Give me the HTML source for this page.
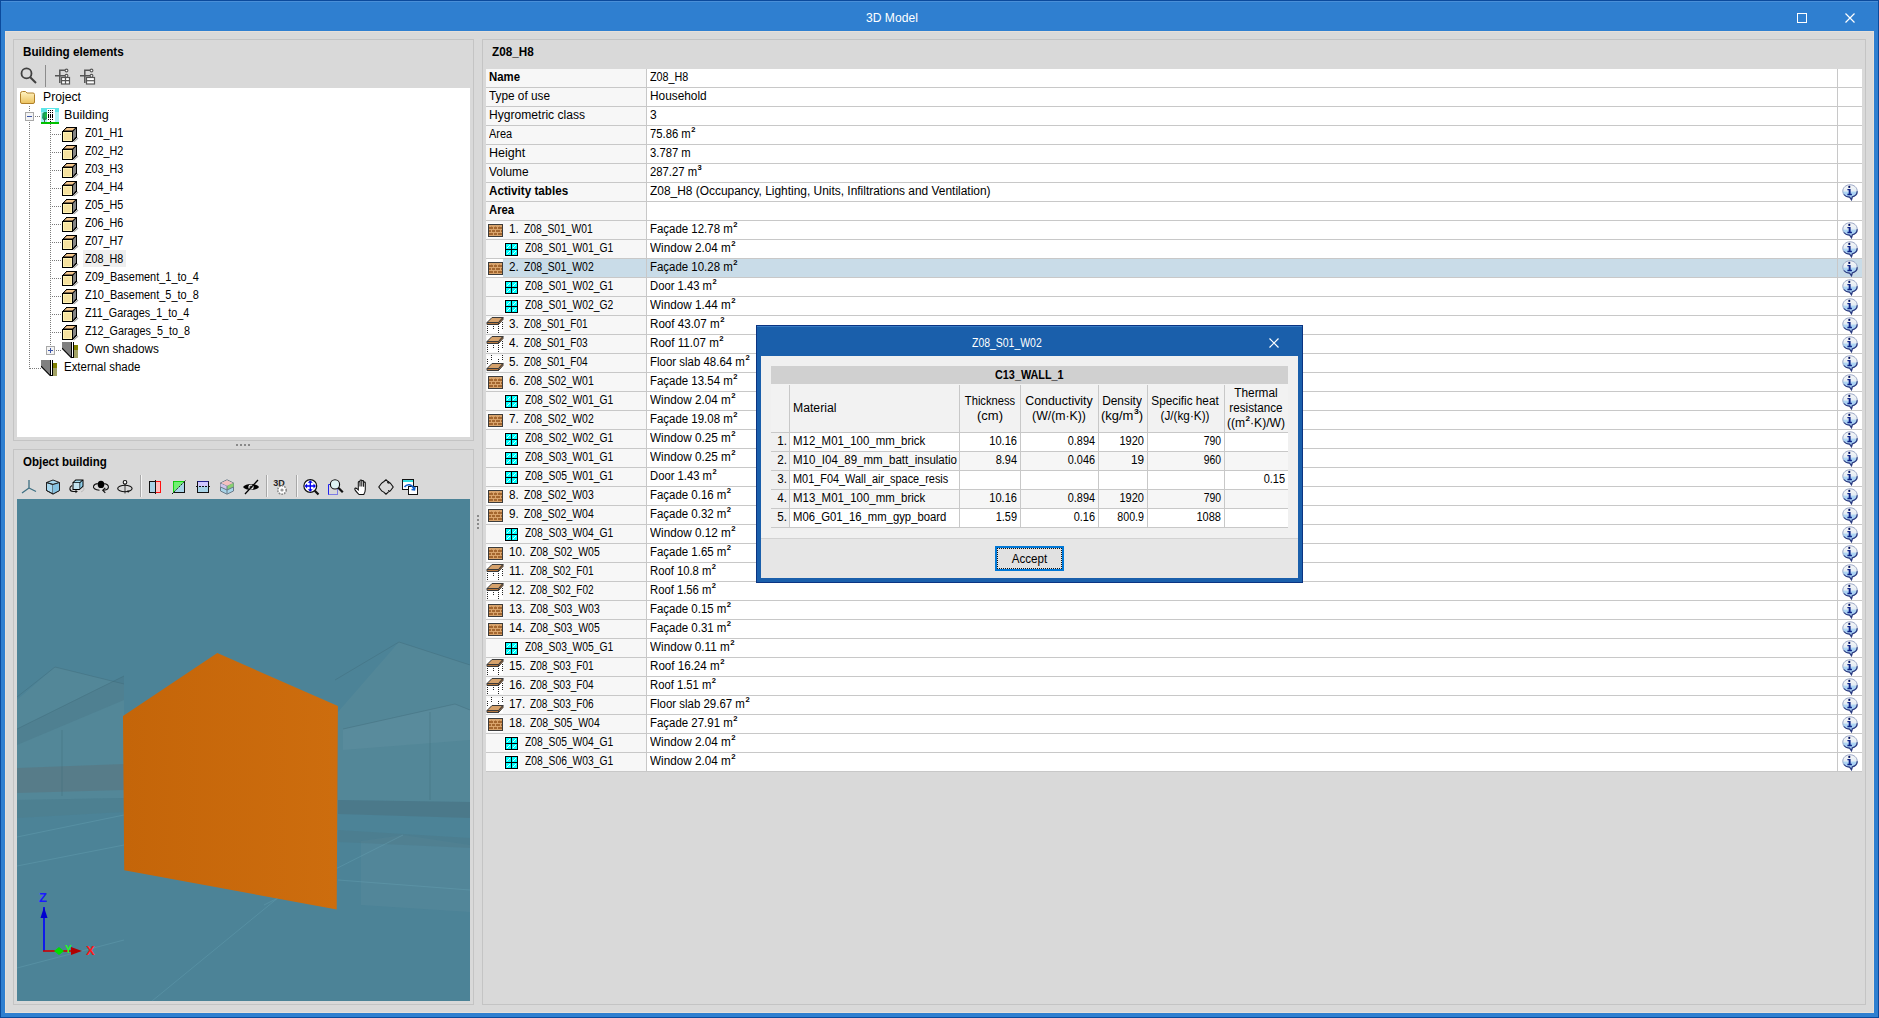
<!DOCTYPE html><html><head><meta charset="utf-8"><title>3D Model</title><style>
*{margin:0;padding:0;box-sizing:border-box}
html,body{width:1879px;height:1018px;overflow:hidden}
body{position:relative;background:#d9d9d9;font-family:"Liberation Sans",sans-serif;font-size:12px;color:#000;line-height:16px}
.a{position:absolute}
.t{position:absolute;white-space:nowrap;line-height:16px}
.b{font-weight:bold}
.sup{font-size:8px;font-weight:bold;position:relative;top:-6px;margin-left:0.5px}
.hl{position:absolute;background:#c8c8c8}
.vl{position:absolute;background:#c8c8c8}
svg{position:absolute;overflow:visible}
.dv{position:absolute;width:1px;background:repeating-linear-gradient(to bottom,#7a7a7a 0,#7a7a7a 1px,transparent 1px,transparent 2px)}
.dh{position:absolute;height:1px;background:repeating-linear-gradient(to right,#7a7a7a 0,#7a7a7a 1px,transparent 1px,transparent 2px)}
</style></head><body>
<svg width="0" height="0" style="position:absolute"><defs>
<symbol id="folder" viewBox="0 0 15 13"><defs><linearGradient id="fg" x1="0" y1="0" x2="0" y2="1"><stop offset="0" stop-color="#fff4c4"/><stop offset="1" stop-color="#ecc25e"/></linearGradient></defs><path d="M0.5 2.5 Q0.5 0.5 2.5 0.5 H5.5 L7 2 H13 Q14.5 2 14.5 3.5 V11 Q14.5 12.5 13 12.5 H2 Q0.5 12.5 0.5 11 Z" fill="url(#fg)" stroke="#b0802a"/></symbol>
<symbol id="cube" viewBox="0 0 17 16" shape-rendering="crispEdges"><path d="M0 4L4 0H15V10L11 15H0Z" fill="#000"/><path d="M2 3.6L4.8 1H13.2L10.4 3.6Z" fill="#f6c88e" shape-rendering="auto"/><path d="M11 4.4L14 1.6V9.6L11 13Z" fill="#858585" shape-rendering="auto"/><rect x="1" y="5" width="9" height="9" fill="#fff2b4"/><rect x="2" y="6" width="7" height="7" fill="#f6e2a0"/><path d="M11.5 15L16 11" stroke="#a0a0a0" stroke-width="1.3" shape-rendering="auto"/></symbol>
<symbol id="shadow" viewBox="0 0 17 17"><path d="M0 0H9.5V15.8L0 6.2Z" fill="#808080"/><path d="M0 6.2L9.5 15.8" stroke="#000" stroke-width="1.1"/><rect x="9" y="0" width="1" height="16" fill="#000"/><rect x="11" y="0" width="1" height="16" fill="#000"/><rect x="10" y="15" width="1" height="1" fill="#000"/><rect x="12" y="3" width="4" height="5" fill="#808000"/><rect x="12" y="8" width="4" height="8" fill="#a3a365"/></symbol>
<symbol id="brick" viewBox="0 0 15 13" shape-rendering="crispEdges"><rect x="0" y="0" width="15" height="13" fill="#3c3c3c"/><rect x="1" y="1" width="13" height="11" fill="#d9a46c"/><rect x="1" y="3" width="4" height="2" fill="#a4672f"/><rect x="6" y="3" width="3" height="2" fill="#a4672f"/><rect x="10" y="3" width="4" height="2" fill="#a4672f"/><rect x="1" y="6" width="2" height="2" fill="#a4672f"/><rect x="4" y="6" width="3" height="2" fill="#a4672f"/><rect x="8" y="6" width="4" height="2" fill="#a4672f"/><rect x="13" y="6" width="1" height="2" fill="#a4672f"/><rect x="1" y="9" width="4" height="2" fill="#a4672f"/><rect x="6" y="9" width="3" height="2" fill="#a4672f"/><rect x="10" y="9" width="4" height="2" fill="#a4672f"/><rect x="3" y="2" width="1" height="1" fill="#c08a55"/><rect x="7" y="2" width="1" height="1" fill="#c08a55"/><rect x="11" y="2" width="1" height="1" fill="#c08a55"/></symbol>
<symbol id="win" viewBox="0 0 13 13"><rect x="0.5" y="0.5" width="12" height="12" fill="#00ffff" stroke="#000"/><path d="M6.5 0.5V12.5M0.5 6.5H12.5" stroke="#000"/><path d="M2 5L5 2M8 5L11 2M2 11L5 8M8 11L11 8" stroke="#fff" stroke-width="0.8"/></symbol>
<symbol id="roof" viewBox="0 0 18 18"><path d="M6 1.5H17L12.5 6.5H1Z" fill="#d6a26c" stroke="#3a3a3a" stroke-width="1"/><path d="M1 6.5H12.5V8.5H1Z" fill="#b77940" stroke="#3a3a3a" stroke-width="1"/><path d="M12.5 6.5L17 1.5V3.5L12.5 8.5Z" fill="#a86a35" stroke="#3a3a3a" stroke-width="1"/><rect x="1" y="10" width="1" height="1" fill="#222"/><rect x="1" y="12" width="1" height="1" fill="#222"/><rect x="1" y="14" width="1" height="1" fill="#222"/><rect x="1" y="16" width="1" height="1" fill="#222"/><rect x="7" y="10" width="1" height="1" fill="#222"/><rect x="7" y="12" width="1" height="1" fill="#222"/><rect x="12" y="10" width="1" height="1" fill="#222"/><rect x="12" y="12" width="1" height="1" fill="#222"/><rect x="12" y="14" width="1" height="1" fill="#222"/><rect x="12" y="16" width="1" height="1" fill="#222"/><rect x="16" y="6" width="1" height="1" fill="#222"/><rect x="16" y="8" width="1" height="1" fill="#222"/><rect x="16" y="10" width="1" height="1" fill="#222"/><rect x="16" y="12" width="1" height="1" fill="#222"/></symbol>
<symbol id="slab" viewBox="0 0 18 18"><rect x="5" y="1" width="1" height="1" fill="#222"/><rect x="5" y="3" width="1" height="1" fill="#222"/><rect x="5" y="5" width="1" height="1" fill="#222"/><rect x="16" y="1" width="1" height="1" fill="#222"/><rect x="16" y="3" width="1" height="1" fill="#222"/><rect x="16" y="5" width="1" height="1" fill="#222"/><rect x="1" y="5" width="1" height="1" fill="#222"/><rect x="1" y="7" width="1" height="1" fill="#222"/><rect x="1" y="9" width="1" height="1" fill="#222"/><rect x="12" y="5" width="1" height="1" fill="#222"/><rect x="12" y="7" width="1" height="1" fill="#222"/><path d="M6 9.5H17L12.5 14.5H1Z" fill="#d6a26c" stroke="#3a3a3a" stroke-width="1"/><path d="M1 14.5H12.5V16.5H1Z" fill="#b77940" stroke="#3a3a3a" stroke-width="1"/><path d="M12.5 14.5L17 9.5V11.5L12.5 16.5Z" fill="#a86a35" stroke="#3a3a3a" stroke-width="1"/></symbol>
<symbol id="info" viewBox="0 0 16 17"><defs><linearGradient id="ig" x1="0" y1="0" x2="0" y2="1"><stop offset="0" stop-color="#f6f6f6"/><stop offset="0.4" stop-color="#e6eef5"/><stop offset="0.52" stop-color="#acd4f4"/><stop offset="1" stop-color="#a4ccf0"/></linearGradient></defs><path d="M8 0.8 C12.2 0.8 15.2 3.6 15.2 7.2 C15.2 10.2 13 12.2 10.3 12.8 L9.5 15.8 L7.6 13.1 C3.5 13 0.8 10.4 0.8 7.2 C0.8 3.6 3.8 0.8 8 0.8 Z" fill="url(#ig)" stroke="#8d9cc0" stroke-width="0.9"/><path d="M15.2 7.2 C15.2 10.2 13 12.2 10.3 12.8 L9.5 15.8 L7.6 13.1 C5 13 3 12 1.8 10.5" fill="none" stroke="#2a3a80" stroke-width="1.2"/><circle cx="7.3" cy="2.9" r="1.1" fill="#001060"/><path d="M5.4 5 H8.6 V9.8 H9.9 V11.2 H5.4 V9.8 H6.7 V6.3 H5.4 Z" fill="#0c2288"/></symbol>
</defs></svg>
<div class="a" style="left:0;top:0;width:1879px;height:1018px;background:#2f7fd0;border:1px solid #0b4a9c"></div>
<div class="a" style="left:1px;top:1px;width:1877px;height:1px;background:#4a8fd8"></div>
<div class="a" style="left:5px;top:31px;width:1869px;height:982px;background:#d9d9d9;border:1px solid #e6e0da"></div>
<div class="t" style="left:866px;top:10px;color:#fff;transform:scaleX(1.010);transform-origin:left">3D Model</div>
<div class="a" style="left:1797px;top:13px;width:10px;height:10px;border:1px solid #fff"></div>
<svg style="left:1845px;top:13px" width="10" height="10"><path d="M0.5 0.5L9.5 9.5M9.5 0.5L0.5 9.5" stroke="#fff" stroke-width="1.2"/></svg>
<div class="a" style="left:13px;top:39px;width:461px;height:402px;border:1px solid #c4c4c4"></div>
<div class="a" style="left:13px;top:449px;width:461px;height:556px;border:1px solid #c4c4c4"></div>
<div class="a" style="left:482px;top:39px;width:1384px;height:966px;border:1px solid #c4c4c4"></div>
<div class="t b" style="left:23px;top:44px;transform:scaleX(0.974);transform-origin:left">Building elements</div>
<div class="t b" style="left:23px;top:454px;transform:scaleX(0.960);transform-origin:left">Object building</div>
<div class="t b" style="left:492px;top:44px;transform:scaleX(0.977);transform-origin:left">Z08_H8</div>
<div class="a" style="left:236px;top:444px;width:2px;height:2px;background:#8a8a8a"></div>
<div class="a" style="left:477px;top:515px;width:2px;height:2px;background:#8a8a8a"></div>
<div class="a" style="left:240px;top:444px;width:2px;height:2px;background:#8a8a8a"></div>
<div class="a" style="left:477px;top:519px;width:2px;height:2px;background:#8a8a8a"></div>
<div class="a" style="left:244px;top:444px;width:2px;height:2px;background:#8a8a8a"></div>
<div class="a" style="left:477px;top:523px;width:2px;height:2px;background:#8a8a8a"></div>
<div class="a" style="left:248px;top:444px;width:2px;height:2px;background:#8a8a8a"></div>
<div class="a" style="left:477px;top:527px;width:2px;height:2px;background:#8a8a8a"></div>
<svg style="left:18px;top:65px" width="22" height="22"><circle cx="8.5" cy="8.4" r="5" fill="none" stroke="#404040" stroke-width="1.8"/><path d="M12.2 12.2L18 18" stroke="#404040" stroke-width="2"/></svg>
<div class="a" style="left:45px;top:65px;width:1px;height:22px;background:#8c8c8c"></div>
<svg style="left:55px;top:69px" width="16" height="16"><path d="M0 6.8H5M4.8 0.5V14M4.8 1.3H10.5M4.8 6.8H10.5" stroke="#555" stroke-width="1.5" fill="none"/><circle cx="11.5" cy="1.5" r="1.4" fill="#fff" stroke="#555" stroke-width="1.1"/><circle cx="11.5" cy="6.8" r="1.4" fill="#fff" stroke="#555" stroke-width="1.1"/><rect x="6.5" y="8.5" width="8" height="6.5" fill="#fff" stroke="#555" stroke-width="1.2"/><path d="M10.5 8.5V15M6.5 11.7H14.5" stroke="#555" stroke-width="1.2"/></svg>
<svg style="left:80px;top:69px" width="16" height="16"><path d="M0 6.8H5M4.8 0.5V14M4.8 1.3H10.5M4.8 6.8H10.5" stroke="#555" stroke-width="1.5" fill="none"/><circle cx="11.5" cy="1.5" r="1.4" fill="#fff" stroke="#555" stroke-width="1.1"/><circle cx="11.5" cy="6.8" r="1.4" fill="#fff" stroke="#555" stroke-width="1.1"/><rect x="6.5" y="8.5" width="8" height="6.5" fill="#fff" stroke="#555" stroke-width="1.2"/><path d="M6.5 11.7H14.5" stroke="#555" stroke-width="1.2"/></svg>
<div class="a" style="left:17px;top:88px;width:453px;height:349px;background:#fff"></div>
<div class="dv" style="left:29px;top:106px;height:263px"></div>
<div class="dh" style="left:30px;top:368px;width:11px"></div>
<div class="dh" style="left:35px;top:116px;width:6px"></div>
<div class="dv" style="left:50px;top:124px;height:223px"></div>
<div class="dh" style="left:52px;top:134px;width:10px"></div>
<div class="dh" style="left:52px;top:152px;width:10px"></div>
<div class="dh" style="left:52px;top:170px;width:10px"></div>
<div class="dh" style="left:52px;top:188px;width:10px"></div>
<div class="dh" style="left:52px;top:206px;width:10px"></div>
<div class="dh" style="left:52px;top:224px;width:10px"></div>
<div class="dh" style="left:52px;top:242px;width:10px"></div>
<div class="dh" style="left:52px;top:260px;width:10px"></div>
<div class="dh" style="left:52px;top:278px;width:10px"></div>
<div class="dh" style="left:52px;top:296px;width:10px"></div>
<div class="dh" style="left:52px;top:314px;width:10px"></div>
<div class="dh" style="left:52px;top:332px;width:10px"></div>
<div class="dh" style="left:56px;top:350px;width:6px"></div>
<div class="a" style="left:83px;top:250px;width:43px;height:17px;background:#efefef"></div>
<svg style="left:20px;top:91px" width="15" height="13"><use href="#folder"/></svg>
<div class="t" style="left:43px;top:89px;transform:scaleX(1.017);transform-origin:left">Project</div>
<svg style="left:41px;top:108px" width="18" height="16" shape-rendering="crispEdges"><rect x="0" y="0" width="18" height="15" fill="#a8f2f4"/><rect x="0" y="0" width="18" height="4" fill="#5ce6e8"/><rect x="6" y="1" width="8" height="14" fill="#fff"/><rect x="7" y="2" width="1" height="1" fill="#000"/><rect x="9" y="2" width="1" height="1" fill="#000"/><rect x="11" y="2" width="1" height="1" fill="#000"/><rect x="7" y="4" width="1" height="1" fill="#000"/><rect x="9" y="4" width="1" height="1" fill="#000"/><rect x="11" y="4" width="1" height="1" fill="#000"/><rect x="7" y="6" width="1" height="4" fill="#000"/><rect x="9" y="6" width="1" height="4" fill="#000"/><rect x="11" y="6" width="1" height="4" fill="#000"/><rect x="7" y="11" width="1" height="1" fill="#000"/><rect x="9" y="11" width="1" height="1" fill="#000"/><rect x="11" y="11" width="1" height="1" fill="#000"/><rect x="9" y="13" width="1" height="2" fill="#000"/><path d="M1.5 5.5L3 4H6V11L4.5 12H2.5L1 10Z" fill="#1a9a5a" shape-rendering="auto"/><path d="M3.5 6L6 5V10L4 9Z" fill="#18c040" shape-rendering="auto"/><rect x="3" y="10" width="1" height="5" fill="#555"/><rect x="0" y="14" width="18" height="2" fill="#00c000"/></svg>
<div class="t" style="left:64px;top:107px;transform:scaleX(1.049);transform-origin:left">Building</div>
<svg style="left:62px;top:127px" width="17" height="16"><use href="#cube"/></svg>
<div class="t" style="left:85px;top:125px;transform:scaleX(0.898);transform-origin:left">Z01_H1</div>
<svg style="left:62px;top:145px" width="17" height="16"><use href="#cube"/></svg>
<div class="t" style="left:85px;top:143px;transform:scaleX(0.898);transform-origin:left">Z02_H2</div>
<svg style="left:62px;top:163px" width="17" height="16"><use href="#cube"/></svg>
<div class="t" style="left:85px;top:161px;transform:scaleX(0.898);transform-origin:left">Z03_H3</div>
<svg style="left:62px;top:181px" width="17" height="16"><use href="#cube"/></svg>
<div class="t" style="left:85px;top:179px;transform:scaleX(0.898);transform-origin:left">Z04_H4</div>
<svg style="left:62px;top:199px" width="17" height="16"><use href="#cube"/></svg>
<div class="t" style="left:85px;top:197px;transform:scaleX(0.898);transform-origin:left">Z05_H5</div>
<svg style="left:62px;top:217px" width="17" height="16"><use href="#cube"/></svg>
<div class="t" style="left:85px;top:215px;transform:scaleX(0.898);transform-origin:left">Z06_H6</div>
<svg style="left:62px;top:235px" width="17" height="16"><use href="#cube"/></svg>
<div class="t" style="left:85px;top:233px;transform:scaleX(0.898);transform-origin:left">Z07_H7</div>
<svg style="left:62px;top:253px" width="17" height="16"><use href="#cube"/></svg>
<div class="t" style="left:85px;top:251px;transform:scaleX(0.898);transform-origin:left">Z08_H8</div>
<svg style="left:62px;top:271px" width="17" height="16"><use href="#cube"/></svg>
<div class="t" style="left:85px;top:269px;transform:scaleX(0.912);transform-origin:left">Z09_Basement_1_to_4</div>
<svg style="left:62px;top:289px" width="17" height="16"><use href="#cube"/></svg>
<div class="t" style="left:85px;top:287px;transform:scaleX(0.912);transform-origin:left">Z10_Basement_5_to_8</div>
<svg style="left:62px;top:307px" width="17" height="16"><use href="#cube"/></svg>
<div class="t" style="left:85px;top:305px;transform:scaleX(0.899);transform-origin:left">Z11_Garages_1_to_4</div>
<svg style="left:62px;top:325px" width="17" height="16"><use href="#cube"/></svg>
<div class="t" style="left:85px;top:323px;transform:scaleX(0.899);transform-origin:left">Z12_Garages_5_to_8</div>
<svg style="left:62px;top:342px" width="17" height="17"><use href="#shadow"/></svg>
<div class="t" style="left:85px;top:341px;transform:scaleX(0.980);transform-origin:left">Own shadows</div>
<svg style="left:41px;top:360px" width="17" height="17"><use href="#shadow"/></svg>
<div class="t" style="left:64px;top:359px;transform:scaleX(0.954);transform-origin:left">External shade</div>
<svg style="left:25px;top:112px" width="9" height="9"><rect x="0.5" y="0.5" width="8" height="8" fill="#f4f4f4" stroke="#a8a8a8"/><path d="M2 4.5H7" stroke="#3c55a8"/></svg>
<svg style="left:46px;top:346px" width="9" height="9"><rect x="0.5" y="0.5" width="8" height="8" fill="#f4f4f4" stroke="#a8a8a8"/><path d="M2 4.5H7M4.5 2V7" stroke="#3c55a8"/></svg>
<svg style="left:21px;top:479px" width="16" height="16"><path d="M8 1V9L1 14M8 9L15 12.5" stroke="#3d6f82" stroke-width="1.3" fill="none"/></svg>
<svg style="left:45px;top:479px" width="16" height="16"><path d="M1.5 3.5L8 1L14.5 3.5V11.5L8 15L1.5 11.5Z" fill="#a8d8ef" stroke="#222"/><path d="M1.5 3.5L8 5.5L14.5 3.5M8 5.5V15" stroke="#222" fill="none"/><path d="M8 5.5L14.5 3.5V11.5L8 15Z" fill="#86c3e2"/><path d="M1.5 3.5L8 5.5L14.5 3.5V11.5L8 15L1.5 11.5Z" fill="none" stroke="#222"/></svg>
<svg style="left:69px;top:479px" width="16" height="16"><path d="M3 6.5C0 8 0 12 4 12.5H8" stroke="#111" fill="none" stroke-width="1.1"/><path d="M6.5 10.8L8.8 12.5L6.5 14.3Z" fill="#111"/><path d="M14 8C15.8 9.5 15 12 12 12.8" stroke="#bbb" fill="none"/><path d="M3.5 3.5L6.5 0.5H14.5V7.5L10.5 11H3.5Z" fill="#000"/><path d="M4.8 3.2L7 1.5H12.8L10.5 3.2Z" fill="#a8dff2"/><path d="M11.2 4L13.5 1.8V7L11.2 9.5Z" fill="#8fd0ec"/><rect x="4.5" y="4" width="6" height="6" fill="#c4e4f0"/></svg>
<svg style="left:93px;top:479px" width="16" height="16"><ellipse cx="8" cy="5.4" rx="3.3" ry="3.7" fill="#000"/><path d="M6.5 11.3C2 11 -0.3 9 0.6 7C1.3 5.4 3.5 4.6 4.8 4.6" stroke="#111" stroke-width="1.1" fill="none"/><path d="M11.2 4.6C13.5 4.8 15.8 6.3 15.4 8.4C15 10.4 12.5 11.2 10 11.3" stroke="#111" stroke-width="1.1" fill="none"/><path d="M12.3 8.8L9.8 11.3L12.3 13.8" stroke="#111" stroke-width="1.2" fill="none"/></svg>
<svg style="left:117px;top:479px" width="16" height="16"><path d="M8 5V14.5" stroke="#777" stroke-width="1.6"/><ellipse cx="7.9" cy="9.5" rx="7.2" ry="3.2" fill="none" stroke="#111" stroke-width="1.1"/><circle cx="8" cy="3.3" r="1.8" fill="#fff" stroke="#111" stroke-width="1.1"/><path d="M10 11.5L12.8 11.8L11 14Z" fill="#111"/></svg>
<div class="a" style="left:140px;top:475px;width:1px;height:22px;background:#a8a8a8"></div><div class="a" style="left:141px;top:475px;width:1px;height:22px;background:#f4f4f4"></div>
<svg style="left:147px;top:479px" width="16" height="16"><rect x="2.5" y="2.5" width="6" height="11" fill="#a8d4e8" stroke="#111"/><rect x="8.5" y="2.5" width="5" height="11" fill="#ffc0c0" stroke="#ff1010"/><path d="M2.5 2.5H8.5V13.5H2.5Z" fill="none" stroke="#111"/><path d="M8.5 1V15" stroke="#111" stroke-dasharray="1.5 1"/></svg>
<svg style="left:171px;top:479px" width="16" height="16"><rect x="2.5" y="2.5" width="11" height="11" fill="#a8d4e8" stroke="#111"/><path d="M2.5 2.5H13.5L2.5 13.5Z" fill="#70f070"/><path d="M2.5 13.5V2.5H13.5" stroke="#10d010" fill="none"/><path d="M1 15L15 1" stroke="#111" stroke-dasharray="1.5 1"/></svg>
<svg style="left:195px;top:479px" width="16" height="16"><rect x="2.5" y="2.5" width="11" height="11" fill="#a8d4e8" stroke="#111"/><rect x="3" y="3" width="10" height="4.5" fill="#d0c8ff"/><path d="M2.5 2.5H13.5" stroke="#202090"/><path d="M1 7.5H15" stroke="#111" stroke-dasharray="2 1"/></svg>
<svg style="left:219px;top:479px" width="16" height="16"><path d="M1.5 4L8 0.8L14.5 4V12L8 15.2L1.5 12Z" fill="#a8d4e8" stroke="#6a7a88"/><path d="M1.5 4L8 7L14.5 4" stroke="#6a7a88" fill="none"/><path d="M8 7L14.5 4V8L8 11Z" fill="#88d070"/><path d="M2 4L8 1.2L14 4L8 6.8Z" fill="#f4c0c0"/><path d="M1.5 4.5L8 7.3V10.5L1.5 7.8Z" fill="#d0c4ec"/><path d="M1.5 8L8 11L14.5 8M8 7V15" stroke="#6a7a88" fill="none"/></svg>
<svg style="left:243px;top:479px" width="16" height="16"><path d="M0 8C2.5 4 13.5 4 16 8C13.5 12 2.5 12 0 8Z" fill="#000"/><circle cx="8" cy="8" r="2.6" fill="#fff"/><circle cx="8" cy="8" r="1.6" fill="#444"/><path d="M2 15L15 1" stroke="#000" stroke-width="1.3"/></svg>
<div class="a" style="left:266px;top:475px;width:1px;height:22px;background:#a8a8a8"></div><div class="a" style="left:267px;top:475px;width:1px;height:22px;background:#f4f4f4"></div>
<svg style="left:273px;top:479px" width="16" height="16"><text x="0.3" y="7.2" font-family="Liberation Sans" font-weight="bold" font-size="9" fill="#222">3D</text><circle cx="9" cy="11" r="4.2" fill="#fff" stroke="#888" stroke-width="1.6" stroke-dasharray="1.7 1"/><circle cx="9" cy="11" r="1.6" fill="#999"/></svg>
<div class="a" style="left:296px;top:475px;width:1px;height:22px;background:#a8a8a8"></div><div class="a" style="left:297px;top:475px;width:1px;height:22px;background:#f4f4f4"></div>
<svg style="left:302px;top:479px" width="16" height="16"><circle cx="8.3" cy="7" r="6.4" fill="#fff" stroke="#111" stroke-width="1.2"/><path d="M8.3 2.5V11.5M3.8 7H12.8" stroke="#0000ee" stroke-width="1.3"/><path d="M8.3 1.3L5.8 3.8H10.8ZM8.3 12.7L5.8 10.2H10.8ZM2.6 7L5.1 4.5V9.5ZM14 7L11.5 4.5V9.5Z" fill="#0000ee"/><path d="M12.8 11.8L16.5 15.5" stroke="#111" stroke-width="2.2"/></svg>
<svg style="left:327px;top:479px" width="16" height="16"><path d="M1.5 15.5V5.5H10.5" stroke="#2222ee" fill="none"/><path d="M1.5 15.5H10.5V5.5" stroke="#2222ee" stroke-dasharray="1 1" fill="none"/><circle cx="8" cy="5.4" r="4.6" fill="#dff4f4" stroke="#111" stroke-width="1.1"/><path d="M11.3 8.7L15.8 13.2" stroke="#111" stroke-width="2.2"/></svg>
<svg style="left:354px;top:479px" width="16" height="16"><path d="M5 15.5C3.5 14 1 11.5 0.8 10.2C0.6 9 2 8.7 3.2 9.8L4.3 10.8V3.2C4.3 2.2 6 2.2 6 3.2V7.5V1.8C6 0.7 7.8 0.7 7.8 1.8V7.5V2.3C7.8 1.3 9.6 1.3 9.6 2.3V7.8V3.8C9.6 2.8 11.3 2.8 11.3 3.8V10.5C11.3 12.8 10.5 14.2 9.8 15.5Z" fill="#fff" stroke="#111" stroke-width="1.05"/></svg>
<svg style="left:378px;top:479px" width="16" height="16"><path d="M6 2.5L8 0.8L10.5 3.2M13 5L15.2 8L13 11M10.5 12.8L8 15.2L5.5 12.8M3 11L0.8 8L3 5" stroke="#111" stroke-width="1.1" fill="none"/><path d="M10.5 3.2C12 3.6 12.7 4.3 13 5M13 11C12.6 11.8 11.8 12.4 10.5 12.8M5.5 12.8C4.2 12.4 3.4 11.8 3 11M3 5C3.4 4.2 4.4 3.4 6 2.5" stroke="#111" stroke-width="1.1" fill="none"/><path d="M9 3.5L11.2 4.3L10.5 2M11.8 12.2L10 11.5" stroke="#111" fill="none"/></svg>
<svg style="left:402px;top:479px" width="16" height="16"><rect x="0.5" y="0.5" width="11" height="10" fill="#fff" stroke="#111"/><rect x="1" y="1" width="10" height="2" fill="#33dddd"/><rect x="6.5" y="7.5" width="9" height="8" fill="#fff" stroke="#111"/><path d="M2.5 8C5 4.5 10 5 12 10" stroke="#1160cc" stroke-width="1.6" fill="none"/><path d="M9.5 10.5L12.5 11L13 7.8" stroke="#1160cc" stroke-width="1.5" fill="none"/></svg>
<svg style="left:17px;top:499px" width="453" height="502" viewBox="0 0 453 502"><defs><linearGradient id="og" x1="0" y1="0" x2="1" y2="0"><stop offset="0" stop-color="#c46509"/><stop offset="1" stop-color="#cd6d0e"/></linearGradient></defs><rect width="453" height="502" fill="#4c8397"/><polygon points="0,201 38,168 107,185 107,299 0,301" fill="#628e9a" fill-opacity="0.35"/><polygon points="0,230 107,177 107,201 0,246" fill="#436c7a" fill-opacity="0.25"/><polygon points="0,269 107,265 107,291 0,294" fill="#5f6d70" fill-opacity="0.38"/><polygon points="0,301 107,299 107,313 0,319" fill="#4f7a86" fill-opacity="0.3"/><polygon points="321,213 382,143 453,166 453,303 321,301" fill="#628e9a" fill-opacity="0.35"/><polygon points="326,230 438,205 453,211 453,241 326,251" fill="#6a98a6" fill-opacity="0.25"/><polygon points="321,301 453,303 453,319 321,315" fill="#4b6c78" fill-opacity="0.4"/><polygon points="344,342 386,336 453,346 453,413 344,406" fill="#5f909e" fill-opacity="0.3"/><polygon points="321,331 453,339 453,349 321,343" fill="#4d7482" fill-opacity="0.3"/><g stroke="#3f6977" stroke-opacity="0.4" fill="none" stroke-width="1"><polyline points="0,198 38,168 107,185"/><polyline points="0,230 107,177"/><polyline points="318,181 382,143 453,166"/><polyline points="326,230 438,205 453,211"/><polyline points="45,231 45,297"/><polyline points="413,213 413,301"/></g><g stroke="#6aa5b8" stroke-opacity="0.35" fill="none" stroke-width="1"><polyline points="0,338 107,316"/><polyline points="0,367 107,346"/><polyline points="247,406 386,336"/><polyline points="135,502 262,398"/><polyline points="321,381 453,391"/><polyline points="0,469 107,441"/></g><polygon points="200.3,154 106,217 107.2,371.29999999999995 319.7,410.5 320.9,207" fill="url(#og)"/></svg>
<svg style="left:25px;top:880px" width="80" height="85"><path d="M19 27V71" stroke="#0000ff" stroke-width="1.6"/><path d="M19 27L15.5 38H22.5Z" fill="#0000d0"/><path d="M18 71H47" stroke="#cc0000" stroke-width="1.6"/><path d="M57 71L46 67V75Z" fill="#b00000"/><path d="M29 71L34 67L39 71L34 75Z" fill="#00dd00"/><text x="14" y="22" font-family="Liberation Sans" font-weight="bold" font-size="13" fill="#1a1aff">Z</text><text x="61" y="75" font-family="Liberation Sans" font-weight="bold" font-size="13" fill="#ff1a1a">X</text><text x="40" y="73" font-family="Liberation Sans" font-weight="bold" font-size="10" fill="#22ff22">Y</text></svg>
<div class="a" style="left:486px;top:69px;width:160px;height:703px;background:#f7f7f7"></div>
<div class="a" style="left:647px;top:69px;width:1215px;height:703px;background:#fff"></div>
<div class="a" style="left:503px;top:259px;width:1359px;height:18px;background:#c9dce8"></div>
<div class="hl" style="left:486px;top:87px;width:1376px;height:1px"></div>
<div class="hl" style="left:486px;top:106px;width:1376px;height:1px"></div>
<div class="hl" style="left:486px;top:125px;width:1376px;height:1px"></div>
<div class="hl" style="left:486px;top:144px;width:1376px;height:1px"></div>
<div class="hl" style="left:486px;top:163px;width:1376px;height:1px"></div>
<div class="hl" style="left:486px;top:182px;width:1376px;height:1px"></div>
<div class="hl" style="left:486px;top:201px;width:1376px;height:1px"></div>
<div class="hl" style="left:486px;top:220px;width:1376px;height:1px"></div>
<div class="hl" style="left:486px;top:239px;width:1376px;height:1px"></div>
<div class="hl" style="left:486px;top:258px;width:1376px;height:1px"></div>
<div class="hl" style="left:486px;top:277px;width:1376px;height:1px"></div>
<div class="hl" style="left:486px;top:296px;width:1376px;height:1px"></div>
<div class="hl" style="left:486px;top:315px;width:1376px;height:1px"></div>
<div class="hl" style="left:486px;top:334px;width:1376px;height:1px"></div>
<div class="hl" style="left:486px;top:353px;width:1376px;height:1px"></div>
<div class="hl" style="left:486px;top:372px;width:1376px;height:1px"></div>
<div class="hl" style="left:486px;top:391px;width:1376px;height:1px"></div>
<div class="hl" style="left:486px;top:410px;width:1376px;height:1px"></div>
<div class="hl" style="left:486px;top:429px;width:1376px;height:1px"></div>
<div class="hl" style="left:486px;top:448px;width:1376px;height:1px"></div>
<div class="hl" style="left:486px;top:467px;width:1376px;height:1px"></div>
<div class="hl" style="left:486px;top:486px;width:1376px;height:1px"></div>
<div class="hl" style="left:486px;top:505px;width:1376px;height:1px"></div>
<div class="hl" style="left:486px;top:524px;width:1376px;height:1px"></div>
<div class="hl" style="left:486px;top:543px;width:1376px;height:1px"></div>
<div class="hl" style="left:486px;top:562px;width:1376px;height:1px"></div>
<div class="hl" style="left:486px;top:581px;width:1376px;height:1px"></div>
<div class="hl" style="left:486px;top:600px;width:1376px;height:1px"></div>
<div class="hl" style="left:486px;top:619px;width:1376px;height:1px"></div>
<div class="hl" style="left:486px;top:638px;width:1376px;height:1px"></div>
<div class="hl" style="left:486px;top:657px;width:1376px;height:1px"></div>
<div class="hl" style="left:486px;top:676px;width:1376px;height:1px"></div>
<div class="hl" style="left:486px;top:695px;width:1376px;height:1px"></div>
<div class="hl" style="left:486px;top:714px;width:1376px;height:1px"></div>
<div class="hl" style="left:486px;top:733px;width:1376px;height:1px"></div>
<div class="hl" style="left:486px;top:752px;width:1376px;height:1px"></div>
<div class="hl" style="left:486px;top:771px;width:1376px;height:1px"></div>
<div class="vl" style="left:646px;top:69px;width:1px;height:703px"></div>
<div class="vl" style="left:1837px;top:69px;width:1px;height:703px"></div>
<div class="t b" style="left:489px;top:69px;transform:scaleX(0.948);transform-origin:left">Name</div>
<div class="t" style="left:650px;top:69px;transform:scaleX(0.898);transform-origin:left">Z08_H8</div>
<div class="t" style="left:489px;top:88px;transform:scaleX(0.983);transform-origin:left">Type of use</div>
<div class="t" style="left:650px;top:88px;transform:scaleX(0.988);transform-origin:left">Household</div>
<div class="t" style="left:489px;top:107px;transform:scaleX(1.007);transform-origin:left">Hygrometric class</div>
<div class="t" style="left:650px;top:107px">3</div>
<div class="t" style="left:489px;top:126px;transform:scaleX(0.912);transform-origin:left">Area</div>
<div class="t" style="left:650px;top:126px;transform:scaleX(0.939);transform-origin:left">75.86 m<span class="sup">2</span></div>
<div class="t" style="left:489px;top:145px;transform:scaleX(1.041);transform-origin:left">Height</div>
<div class="t" style="left:650px;top:145px;transform:scaleX(0.937);transform-origin:left">3.787 m</div>
<div class="t" style="left:489px;top:164px;transform:scaleX(0.990);transform-origin:left">Volume</div>
<div class="t" style="left:650px;top:164px;transform:scaleX(0.941);transform-origin:left">287.27 m<span class="sup">3</span></div>
<div class="t b" style="left:489px;top:183px;transform:scaleX(0.973);transform-origin:left">Activity tables</div>
<div class="t" style="left:650px;top:183px;transform:scaleX(0.994);transform-origin:left">Z08_H8 (Occupancy, Lighting, Units, Infiltrations and Ventilation)</div>
<svg style="left:1842px;top:184px" width="16" height="17"><use href="#info"/></svg>
<div class="t b" style="left:489px;top:202px;transform:scaleX(0.940);transform-origin:left">Area</div>
<div class="a" style="left:487px;top:223px;width:16px;height:15px;background:#fff"></div>
<svg style="left:488px;top:224px" width="15" height="13"><use href="#brick"/></svg>
<div class="t" style="left:509px;top:221px;transform:scaleX(0.969);transform-origin:left">1.</div>
<div class="t" style="left:524px;top:221px;transform:scaleX(0.857);transform-origin:left">Z08_S01_W01</div>
<div class="t" style="left:650px;top:221px;transform:scaleX(0.954);transform-origin:left">Façade 12.78 m<span class="sup">2</span></div>
<svg style="left:1842px;top:222px" width="16" height="17"><use href="#info"/></svg>
<div class="a" style="left:504px;top:242px;width:16px;height:15px;background:#fff"></div>
<svg style="left:505px;top:243px" width="13" height="13"><use href="#win"/></svg>
<div class="t" style="left:525px;top:240px;transform:scaleX(0.860);transform-origin:left">Z08_S01_W01_G1</div>
<div class="t" style="left:650px;top:240px;transform:scaleX(0.976);transform-origin:left">Window 2.04 m<span class="sup">2</span></div>
<svg style="left:1842px;top:241px" width="16" height="17"><use href="#info"/></svg>
<div class="a" style="left:487px;top:259px;width:16px;height:18px;background:#fff"></div>
<svg style="left:488px;top:262px" width="15" height="13"><use href="#brick"/></svg>
<div class="t" style="left:509px;top:259px;transform:scaleX(0.972);transform-origin:left">2.</div>
<div class="t" style="left:524px;top:259px;transform:scaleX(0.871);transform-origin:left">Z08_S01_W02</div>
<div class="t" style="left:650px;top:259px;transform:scaleX(0.954);transform-origin:left">Façade 10.28 m<span class="sup">2</span></div>
<svg style="left:1842px;top:260px" width="16" height="17"><use href="#info"/></svg>
<div class="a" style="left:504px;top:280px;width:16px;height:15px;background:#fff"></div>
<svg style="left:505px;top:281px" width="13" height="13"><use href="#win"/></svg>
<div class="t" style="left:525px;top:278px;transform:scaleX(0.860);transform-origin:left">Z08_S01_W02_G1</div>
<div class="t" style="left:650px;top:278px;transform:scaleX(0.938);transform-origin:left">Door 1.43 m<span class="sup">2</span></div>
<svg style="left:1842px;top:279px" width="16" height="17"><use href="#info"/></svg>
<div class="a" style="left:504px;top:299px;width:16px;height:15px;background:#fff"></div>
<svg style="left:505px;top:300px" width="13" height="13"><use href="#win"/></svg>
<div class="t" style="left:525px;top:297px;transform:scaleX(0.860);transform-origin:left">Z08_S01_W02_G2</div>
<div class="t" style="left:650px;top:297px;transform:scaleX(0.976);transform-origin:left">Window 1.44 m<span class="sup">2</span></div>
<svg style="left:1842px;top:298px" width="16" height="17"><use href="#info"/></svg>
<div class="a" style="left:487px;top:318px;width:16px;height:15px;background:#fff"></div>
<svg style="left:486px;top:316px" width="18" height="18"><use href="#roof"/></svg>
<div class="t" style="left:509px;top:316px;transform:scaleX(0.969);transform-origin:left">3.</div>
<div class="t" style="left:524px;top:316px;transform:scaleX(0.837);transform-origin:left">Z08_S01_F01</div>
<div class="t" style="left:650px;top:316px;transform:scaleX(0.967);transform-origin:left">Roof 43.07 m<span class="sup">2</span></div>
<svg style="left:1842px;top:317px" width="16" height="17"><use href="#info"/></svg>
<div class="a" style="left:487px;top:337px;width:16px;height:15px;background:#fff"></div>
<svg style="left:486px;top:335px" width="18" height="18"><use href="#roof"/></svg>
<div class="t" style="left:509px;top:335px;transform:scaleX(0.972);transform-origin:left">4.</div>
<div class="t" style="left:524px;top:335px;transform:scaleX(0.837);transform-origin:left">Z08_S01_F03</div>
<div class="t" style="left:650px;top:335px;transform:scaleX(0.967);transform-origin:left">Roof 11.07 m<span class="sup">2</span></div>
<svg style="left:1842px;top:336px" width="16" height="17"><use href="#info"/></svg>
<div class="a" style="left:487px;top:356px;width:16px;height:15px;background:#fff"></div>
<svg style="left:486px;top:354px" width="18" height="18"><use href="#slab"/></svg>
<div class="t" style="left:509px;top:354px;transform:scaleX(0.969);transform-origin:left">5.</div>
<div class="t" style="left:524px;top:354px;transform:scaleX(0.837);transform-origin:left">Z08_S01_F04</div>
<div class="t" style="left:650px;top:354px;transform:scaleX(0.955);transform-origin:left">Floor slab 48.64 m<span class="sup">2</span></div>
<svg style="left:1842px;top:355px" width="16" height="17"><use href="#info"/></svg>
<div class="a" style="left:487px;top:375px;width:16px;height:15px;background:#fff"></div>
<svg style="left:488px;top:376px" width="15" height="13"><use href="#brick"/></svg>
<div class="t" style="left:509px;top:373px;transform:scaleX(0.972);transform-origin:left">6.</div>
<div class="t" style="left:524px;top:373px;transform:scaleX(0.871);transform-origin:left">Z08_S02_W01</div>
<div class="t" style="left:650px;top:373px;transform:scaleX(0.954);transform-origin:left">Façade 13.54 m<span class="sup">2</span></div>
<svg style="left:1842px;top:374px" width="16" height="17"><use href="#info"/></svg>
<div class="a" style="left:504px;top:394px;width:16px;height:15px;background:#fff"></div>
<svg style="left:505px;top:395px" width="13" height="13"><use href="#win"/></svg>
<div class="t" style="left:525px;top:392px;transform:scaleX(0.860);transform-origin:left">Z08_S02_W01_G1</div>
<div class="t" style="left:650px;top:392px;transform:scaleX(0.976);transform-origin:left">Window 2.04 m<span class="sup">2</span></div>
<svg style="left:1842px;top:393px" width="16" height="17"><use href="#info"/></svg>
<div class="a" style="left:487px;top:413px;width:16px;height:15px;background:#fff"></div>
<svg style="left:488px;top:414px" width="15" height="13"><use href="#brick"/></svg>
<div class="t" style="left:509px;top:411px;transform:scaleX(0.972);transform-origin:left">7.</div>
<div class="t" style="left:524px;top:411px;transform:scaleX(0.871);transform-origin:left">Z08_S02_W02</div>
<div class="t" style="left:650px;top:411px;transform:scaleX(0.954);transform-origin:left">Façade 19.08 m<span class="sup">2</span></div>
<svg style="left:1842px;top:412px" width="16" height="17"><use href="#info"/></svg>
<div class="a" style="left:504px;top:432px;width:16px;height:15px;background:#fff"></div>
<svg style="left:505px;top:433px" width="13" height="13"><use href="#win"/></svg>
<div class="t" style="left:525px;top:430px;transform:scaleX(0.860);transform-origin:left">Z08_S02_W02_G1</div>
<div class="t" style="left:650px;top:430px;transform:scaleX(0.976);transform-origin:left">Window 0.25 m<span class="sup">2</span></div>
<svg style="left:1842px;top:431px" width="16" height="17"><use href="#info"/></svg>
<div class="a" style="left:504px;top:451px;width:16px;height:15px;background:#fff"></div>
<svg style="left:505px;top:452px" width="13" height="13"><use href="#win"/></svg>
<div class="t" style="left:525px;top:449px;transform:scaleX(0.860);transform-origin:left">Z08_S03_W01_G1</div>
<div class="t" style="left:650px;top:449px;transform:scaleX(0.976);transform-origin:left">Window 0.25 m<span class="sup">2</span></div>
<svg style="left:1842px;top:450px" width="16" height="17"><use href="#info"/></svg>
<div class="a" style="left:504px;top:470px;width:16px;height:15px;background:#fff"></div>
<svg style="left:505px;top:471px" width="13" height="13"><use href="#win"/></svg>
<div class="t" style="left:525px;top:468px;transform:scaleX(0.860);transform-origin:left">Z08_S05_W01_G1</div>
<div class="t" style="left:650px;top:468px;transform:scaleX(0.938);transform-origin:left">Door 1.43 m<span class="sup">2</span></div>
<svg style="left:1842px;top:469px" width="16" height="17"><use href="#info"/></svg>
<div class="a" style="left:487px;top:489px;width:16px;height:15px;background:#fff"></div>
<svg style="left:488px;top:490px" width="15" height="13"><use href="#brick"/></svg>
<div class="t" style="left:509px;top:487px;transform:scaleX(0.972);transform-origin:left">8.</div>
<div class="t" style="left:524px;top:487px;transform:scaleX(0.871);transform-origin:left">Z08_S02_W03</div>
<div class="t" style="left:650px;top:487px;transform:scaleX(0.954);transform-origin:left">Façade 0.16 m<span class="sup">2</span></div>
<svg style="left:1842px;top:488px" width="16" height="17"><use href="#info"/></svg>
<div class="a" style="left:487px;top:508px;width:16px;height:15px;background:#fff"></div>
<svg style="left:488px;top:509px" width="15" height="13"><use href="#brick"/></svg>
<div class="t" style="left:509px;top:506px;transform:scaleX(0.972);transform-origin:left">9.</div>
<div class="t" style="left:524px;top:506px;transform:scaleX(0.871);transform-origin:left">Z08_S02_W04</div>
<div class="t" style="left:650px;top:506px;transform:scaleX(0.954);transform-origin:left">Façade 0.32 m<span class="sup">2</span></div>
<svg style="left:1842px;top:507px" width="16" height="17"><use href="#info"/></svg>
<div class="a" style="left:504px;top:527px;width:16px;height:15px;background:#fff"></div>
<svg style="left:505px;top:528px" width="13" height="13"><use href="#win"/></svg>
<div class="t" style="left:525px;top:525px;transform:scaleX(0.860);transform-origin:left">Z08_S03_W04_G1</div>
<div class="t" style="left:650px;top:525px;transform:scaleX(0.976);transform-origin:left">Window 0.12 m<span class="sup">2</span></div>
<svg style="left:1842px;top:526px" width="16" height="17"><use href="#info"/></svg>
<div class="a" style="left:487px;top:546px;width:16px;height:15px;background:#fff"></div>
<svg style="left:488px;top:547px" width="15" height="13"><use href="#brick"/></svg>
<div class="t" style="left:509px;top:544px;transform:scaleX(0.966);transform-origin:left">10.</div>
<div class="t" style="left:530px;top:544px;transform:scaleX(0.871);transform-origin:left">Z08_S02_W05</div>
<div class="t" style="left:650px;top:544px;transform:scaleX(0.954);transform-origin:left">Façade 1.65 m<span class="sup">2</span></div>
<svg style="left:1842px;top:545px" width="16" height="17"><use href="#info"/></svg>
<div class="a" style="left:487px;top:565px;width:16px;height:15px;background:#fff"></div>
<svg style="left:486px;top:563px" width="18" height="18"><use href="#roof"/></svg>
<div class="t" style="left:509px;top:563px;transform:scaleX(0.964);transform-origin:left">11.</div>
<div class="t" style="left:530px;top:563px;transform:scaleX(0.837);transform-origin:left">Z08_S02_F01</div>
<div class="t" style="left:650px;top:563px;transform:scaleX(0.938);transform-origin:left">Roof 10.8 m<span class="sup">2</span></div>
<svg style="left:1842px;top:564px" width="16" height="17"><use href="#info"/></svg>
<div class="a" style="left:487px;top:584px;width:16px;height:15px;background:#fff"></div>
<svg style="left:486px;top:582px" width="18" height="18"><use href="#roof"/></svg>
<div class="t" style="left:509px;top:582px;transform:scaleX(0.966);transform-origin:left">12.</div>
<div class="t" style="left:530px;top:582px;transform:scaleX(0.837);transform-origin:left">Z08_S02_F02</div>
<div class="t" style="left:650px;top:582px;transform:scaleX(0.938);transform-origin:left">Roof 1.56 m<span class="sup">2</span></div>
<svg style="left:1842px;top:583px" width="16" height="17"><use href="#info"/></svg>
<div class="a" style="left:487px;top:603px;width:16px;height:15px;background:#fff"></div>
<svg style="left:488px;top:604px" width="15" height="13"><use href="#brick"/></svg>
<div class="t" style="left:509px;top:601px;transform:scaleX(0.966);transform-origin:left">13.</div>
<div class="t" style="left:530px;top:601px;transform:scaleX(0.871);transform-origin:left">Z08_S03_W03</div>
<div class="t" style="left:650px;top:601px;transform:scaleX(0.954);transform-origin:left">Façade 0.15 m<span class="sup">2</span></div>
<svg style="left:1842px;top:602px" width="16" height="17"><use href="#info"/></svg>
<div class="a" style="left:487px;top:622px;width:16px;height:15px;background:#fff"></div>
<svg style="left:488px;top:623px" width="15" height="13"><use href="#brick"/></svg>
<div class="t" style="left:509px;top:620px;transform:scaleX(0.966);transform-origin:left">14.</div>
<div class="t" style="left:530px;top:620px;transform:scaleX(0.871);transform-origin:left">Z08_S03_W05</div>
<div class="t" style="left:650px;top:620px;transform:scaleX(0.954);transform-origin:left">Façade 0.31 m<span class="sup">2</span></div>
<svg style="left:1842px;top:621px" width="16" height="17"><use href="#info"/></svg>
<div class="a" style="left:504px;top:641px;width:16px;height:15px;background:#fff"></div>
<svg style="left:505px;top:642px" width="13" height="13"><use href="#win"/></svg>
<div class="t" style="left:525px;top:639px;transform:scaleX(0.860);transform-origin:left">Z08_S03_W05_G1</div>
<div class="t" style="left:650px;top:639px;transform:scaleX(0.975);transform-origin:left">Window 0.11 m<span class="sup">2</span></div>
<svg style="left:1842px;top:640px" width="16" height="17"><use href="#info"/></svg>
<div class="a" style="left:487px;top:660px;width:16px;height:15px;background:#fff"></div>
<svg style="left:486px;top:658px" width="18" height="18"><use href="#roof"/></svg>
<div class="t" style="left:509px;top:658px;transform:scaleX(0.966);transform-origin:left">15.</div>
<div class="t" style="left:530px;top:658px;transform:scaleX(0.837);transform-origin:left">Z08_S03_F01</div>
<div class="t" style="left:650px;top:658px;transform:scaleX(0.967);transform-origin:left">Roof 16.24 m<span class="sup">2</span></div>
<svg style="left:1842px;top:659px" width="16" height="17"><use href="#info"/></svg>
<div class="a" style="left:487px;top:679px;width:16px;height:15px;background:#fff"></div>
<svg style="left:486px;top:677px" width="18" height="18"><use href="#roof"/></svg>
<div class="t" style="left:509px;top:677px;transform:scaleX(0.966);transform-origin:left">16.</div>
<div class="t" style="left:530px;top:677px;transform:scaleX(0.837);transform-origin:left">Z08_S03_F04</div>
<div class="t" style="left:650px;top:677px;transform:scaleX(0.938);transform-origin:left">Roof 1.51 m<span class="sup">2</span></div>
<svg style="left:1842px;top:678px" width="16" height="17"><use href="#info"/></svg>
<div class="a" style="left:487px;top:698px;width:16px;height:15px;background:#fff"></div>
<svg style="left:486px;top:696px" width="18" height="18"><use href="#slab"/></svg>
<div class="t" style="left:509px;top:696px;transform:scaleX(0.966);transform-origin:left">17.</div>
<div class="t" style="left:530px;top:696px;transform:scaleX(0.837);transform-origin:left">Z08_S03_F06</div>
<div class="t" style="left:650px;top:696px;transform:scaleX(0.955);transform-origin:left">Floor slab 29.67 m<span class="sup">2</span></div>
<svg style="left:1842px;top:697px" width="16" height="17"><use href="#info"/></svg>
<div class="a" style="left:487px;top:717px;width:16px;height:15px;background:#fff"></div>
<svg style="left:488px;top:718px" width="15" height="13"><use href="#brick"/></svg>
<div class="t" style="left:509px;top:715px;transform:scaleX(0.966);transform-origin:left">18.</div>
<div class="t" style="left:530px;top:715px;transform:scaleX(0.871);transform-origin:left">Z08_S05_W04</div>
<div class="t" style="left:650px;top:715px;transform:scaleX(0.954);transform-origin:left">Façade 27.91 m<span class="sup">2</span></div>
<svg style="left:1842px;top:716px" width="16" height="17"><use href="#info"/></svg>
<div class="a" style="left:504px;top:736px;width:16px;height:15px;background:#fff"></div>
<svg style="left:505px;top:737px" width="13" height="13"><use href="#win"/></svg>
<div class="t" style="left:525px;top:734px;transform:scaleX(0.860);transform-origin:left">Z08_S05_W04_G1</div>
<div class="t" style="left:650px;top:734px;transform:scaleX(0.976);transform-origin:left">Window 2.04 m<span class="sup">2</span></div>
<svg style="left:1842px;top:735px" width="16" height="17"><use href="#info"/></svg>
<div class="a" style="left:504px;top:755px;width:16px;height:15px;background:#fff"></div>
<svg style="left:505px;top:756px" width="13" height="13"><use href="#win"/></svg>
<div class="t" style="left:525px;top:753px;transform:scaleX(0.860);transform-origin:left">Z08_S06_W03_G1</div>
<div class="t" style="left:650px;top:753px;transform:scaleX(0.976);transform-origin:left">Window 2.04 m<span class="sup">2</span></div>
<svg style="left:1842px;top:754px" width="16" height="17"><use href="#info"/></svg>
<div class="a" style="left:756px;top:325px;width:547px;height:258px;background:#1a5fab;border:1px solid #0a3482"></div>
<div class="a" style="left:757px;top:326px;width:545px;height:1px;background:#3a7cc4"></div>
<div class="t" style="left:972px;top:335px;color:#fff;transform:scaleX(0.871);transform-origin:left">Z08_S01_W02</div>
<svg style="left:1269px;top:338px" width="10" height="10"><path d="M0.5 0.5L9.5 9.5M9.5 0.5L0.5 9.5" stroke="#fff" stroke-width="1.2"/></svg>
<div class="a" style="left:761px;top:356px;width:537px;height:222px;background:#f0f0f0"></div>
<div class="a" style="left:761px;top:539px;width:537px;height:39px;background:#e6e6e6"></div>
<div class="a" style="left:761px;top:538px;width:537px;height:1px;background:#d2d2d2"></div>
<div class="a" style="left:771px;top:366px;width:517px;height:18px;background:#d0d0d0"></div>
<div class="t b" style="left:995px;top:367px;transform:scaleX(0.903);transform-origin:left">C13_WALL_1</div>
<div class="a" style="left:771px;top:384px;width:517px;height:48px;background:#f2f2f2"></div>
<div class="a" style="left:771px;top:433px;width:18px;height:18px;background:#f0f0f0"></div>
<div class="a" style="left:790px;top:433px;width:498px;height:18px;background:#ffffff"></div>
<div class="a" style="left:771px;top:452px;width:18px;height:18px;background:#f0f0f0"></div>
<div class="a" style="left:790px;top:452px;width:498px;height:18px;background:#f6f6f6"></div>
<div class="a" style="left:771px;top:471px;width:18px;height:18px;background:#f0f0f0"></div>
<div class="a" style="left:790px;top:471px;width:498px;height:18px;background:#ffffff"></div>
<div class="a" style="left:771px;top:490px;width:18px;height:18px;background:#f0f0f0"></div>
<div class="a" style="left:790px;top:490px;width:498px;height:18px;background:#f6f6f6"></div>
<div class="a" style="left:771px;top:509px;width:18px;height:18px;background:#f0f0f0"></div>
<div class="a" style="left:790px;top:509px;width:498px;height:18px;background:#ffffff"></div>
<div class="hl" style="left:771px;top:432px;width:517px;height:1px"></div>
<div class="hl" style="left:771px;top:451px;width:517px;height:1px"></div>
<div class="hl" style="left:771px;top:470px;width:517px;height:1px"></div>
<div class="hl" style="left:771px;top:489px;width:517px;height:1px"></div>
<div class="hl" style="left:771px;top:508px;width:517px;height:1px"></div>
<div class="hl" style="left:771px;top:527px;width:517px;height:1px"></div>
<div class="vl" style="left:789px;top:385px;width:1px;height:142px"></div>
<div class="vl" style="left:959px;top:385px;width:1px;height:142px"></div>
<div class="vl" style="left:1020px;top:385px;width:1px;height:142px"></div>
<div class="vl" style="left:1098px;top:385px;width:1px;height:142px"></div>
<div class="vl" style="left:1147px;top:385px;width:1px;height:142px"></div>
<div class="vl" style="left:1224px;top:385px;width:1px;height:142px"></div>
<div class="t" style="left:793px;top:400px;transform:scaleX(1.018);transform-origin:left">Material</div>
<div class="t" style="left:890px;width:200px;text-align:center;top:393px;transform:scaleX(0.931);transform-origin:center">Thickness</div>
<div class="t" style="left:890px;width:200px;text-align:center;top:408px;transform:scaleX(1.080);transform-origin:center">(cm)</div>
<div class="t" style="left:959px;width:200px;text-align:center;top:393px;transform:scaleX(1.032);transform-origin:center">Conductivity</div>
<div class="t" style="left:959px;width:200px;text-align:center;top:408px;transform:scaleX(1.024);transform-origin:center">(W/(m·K))</div>
<div class="t" style="left:1022px;width:200px;text-align:center;top:393px;transform:scaleX(0.992);transform-origin:center">Density</div>
<div class="t" style="left:1022px;width:200px;text-align:center;top:408px;transform:scaleX(1.080);transform-origin:center">(kg/m<span class="sup">3</span>)</div>
<div class="t" style="left:1085px;width:200px;text-align:center;top:393px;transform:scaleX(0.981);transform-origin:center">Specific heat</div>
<div class="t" style="left:1085px;width:200px;text-align:center;top:408px;transform:scaleX(0.979);transform-origin:center">(J/(kg·K))</div>
<div class="t" style="left:1156px;width:200px;text-align:center;top:385px;transform:scaleX(0.986);transform-origin:center">Thermal</div>
<div class="t" style="left:1156px;width:200px;text-align:center;top:400px;transform:scaleX(0.974);transform-origin:center">resistance</div>
<div class="t" style="left:1156px;width:200px;text-align:center;top:415px;transform:scaleX(1.010);transform-origin:center">((m<span class="sup">2</span>·K)/W)</div>
<div class="t" style="left:771px;width:16px;text-align:right;top:433px;transform:scaleX(0.969);transform-origin:right">1.</div>
<div class="t" style="left:793px;top:433px;transform:scaleX(0.953);transform-origin:left">M12_M01_100_mm_brick</div>
<div class="t" style="left:959px;width:58px;text-align:right;top:433px;transform:scaleX(0.924);transform-origin:right">10.16</div>
<div class="t" style="left:1020px;width:75px;text-align:right;top:433px;transform:scaleX(0.907);transform-origin:right">0.894</div>
<div class="t" style="left:1098px;width:46px;text-align:right;top:433px;transform:scaleX(0.920);transform-origin:right">1920</div>
<div class="t" style="left:1147px;width:74px;text-align:right;top:433px;transform:scaleX(0.865);transform-origin:right">790</div>
<div class="t" style="left:771px;width:16px;text-align:right;top:452px;transform:scaleX(0.972);transform-origin:right">2.</div>
<div class="t" style="left:793px;top:452px;transform:scaleX(0.960);transform-origin:left">M10_I04_89_mm_batt_insulatio</div>
<div class="t" style="left:959px;width:58px;text-align:right;top:452px;transform:scaleX(0.915);transform-origin:right">8.94</div>
<div class="t" style="left:1020px;width:75px;text-align:right;top:452px;transform:scaleX(0.907);transform-origin:right">0.046</div>
<div class="t" style="left:1098px;width:46px;text-align:right;top:452px;transform:scaleX(0.979);transform-origin:right">19</div>
<div class="t" style="left:1147px;width:74px;text-align:right;top:452px;transform:scaleX(0.865);transform-origin:right">960</div>
<div class="t" style="left:771px;width:16px;text-align:right;top:471px;transform:scaleX(0.969);transform-origin:right">3.</div>
<div class="t" style="left:793px;top:471px;transform:scaleX(0.908);transform-origin:left">M01_F04_Wall_air_space_resis</div>
<div class="t" style="left:1224px;width:61px;text-align:right;top:471px;transform:scaleX(0.915);transform-origin:right">0.15</div>
<div class="t" style="left:771px;width:16px;text-align:right;top:490px;transform:scaleX(0.972);transform-origin:right">4.</div>
<div class="t" style="left:793px;top:490px;transform:scaleX(0.953);transform-origin:left">M13_M01_100_mm_brick</div>
<div class="t" style="left:959px;width:58px;text-align:right;top:490px;transform:scaleX(0.924);transform-origin:right">10.16</div>
<div class="t" style="left:1020px;width:75px;text-align:right;top:490px;transform:scaleX(0.907);transform-origin:right">0.894</div>
<div class="t" style="left:1098px;width:46px;text-align:right;top:490px;transform:scaleX(0.920);transform-origin:right">1920</div>
<div class="t" style="left:1147px;width:74px;text-align:right;top:490px;transform:scaleX(0.865);transform-origin:right">790</div>
<div class="t" style="left:771px;width:16px;text-align:right;top:509px;transform:scaleX(0.969);transform-origin:right">5.</div>
<div class="t" style="left:793px;top:509px;transform:scaleX(0.942);transform-origin:left">M06_G01_16_mm_gyp_board</div>
<div class="t" style="left:959px;width:58px;text-align:right;top:509px;transform:scaleX(0.911);transform-origin:right">1.59</div>
<div class="t" style="left:1020px;width:75px;text-align:right;top:509px;transform:scaleX(0.915);transform-origin:right">0.16</div>
<div class="t" style="left:1098px;width:46px;text-align:right;top:509px;transform:scaleX(0.887);transform-origin:right">800.9</div>
<div class="t" style="left:1147px;width:74px;text-align:right;top:509px;transform:scaleX(0.920);transform-origin:right">1088</div>
<div class="a" style="left:995px;top:546px;width:69px;height:25px;background:#e1e1e1;border:2px solid #0078d7"></div>
<div class="a" style="left:997px;top:548px;width:65px;height:1px;background:repeating-linear-gradient(to right,#111 0,#111 1px,transparent 1px,transparent 2px)"></div>
<div class="a" style="left:997px;top:568px;width:65px;height:1px;background:repeating-linear-gradient(to right,#111 0,#111 1px,transparent 1px,transparent 2px)"></div>
<div class="a" style="left:997px;top:548px;width:1px;height:21px;background:repeating-linear-gradient(to bottom,#111 0,#111 1px,transparent 1px,transparent 2px)"></div>
<div class="a" style="left:1061px;top:548px;width:1px;height:21px;background:repeating-linear-gradient(to bottom,#111 0,#111 1px,transparent 1px,transparent 2px)"></div>
<div class="t" style="left:995px;width:69px;text-align:center;top:551px;transform:scaleX(0.967);transform-origin:center">Accept</div>
</body></html>
